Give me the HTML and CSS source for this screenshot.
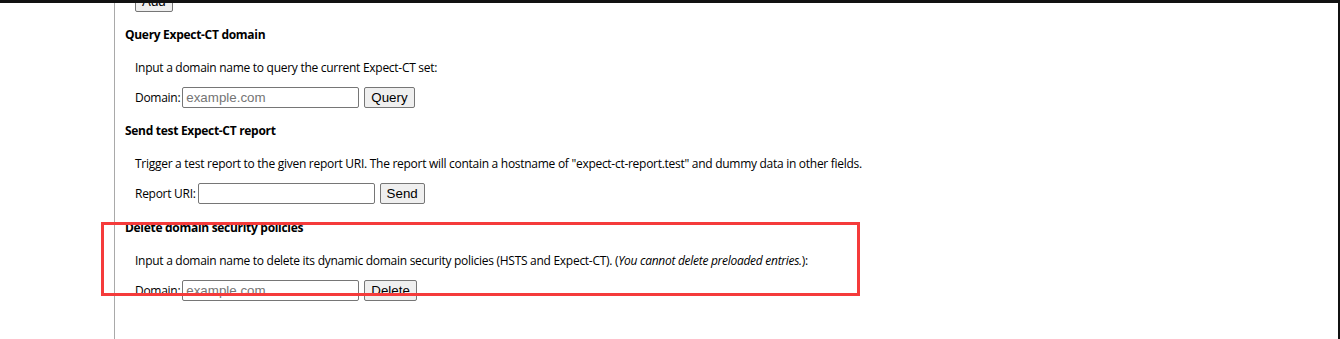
FILE: index.html
```html
<!DOCTYPE html>
<html lang="en">
<head>
  <meta charset="utf-8" />
  <title>Domain Security Policy</title>
  <link rel="stylesheet" href="styles.css">
</head>
<body>
  <div class="frame">
    <!-- left nav column (empty at this scroll position) -->
    <aside class="sidebar"></aside>

    <main class="content">
      <div class="row addRow">
        <button type="button">Add</button>
      </div>

      <!-- QUERY EXPECT-CT -->
      <section class="block">
        <h4>Query Expect-CT domain</h4>
        <p>Input a domain name to query the current Expect-CT set:</p>
        <form class="row">
          <label for="ctQueryInput">Domain:</label>
          <input type="text" id="ctQueryInput" placeholder="example.com" />
          <button type="button">Query</button>
        </form>
      </section>

      <!-- TEST REPORT -->
      <section class="block">
        <h4>Send test Expect-CT report</h4>
        <p>Trigger a test report to the given report URI. The report will contain a hostname of "expect-ct-report.test" and dummy data in other fields.</p>
        <form class="row">
          <label for="ctReportInput">Report URI:</label>
          <input type="text" id="ctReportInput" />
          <button type="button">Send</button>
        </form>
      </section>

      <!-- DELETE -->
      <section class="block last">
        <h4>Delete domain security policies</h4>
        <p>Input a domain name to delete its dynamic domain security policies (HSTS and Expect-CT). (<i>You cannot delete preloaded entries.</i>):</p>
        <form class="row">
          <label for="deleteInput">Domain:</label>
          <input type="text" id="deleteInput" placeholder="example.com" />
          <button type="button">Delete</button>
        </form>
      </section>
    </main>

    <!-- red annotation box -->
    <div class="highlight"></div>
  </div>
</body>
</html>
```

FILE: styles.css
```css
/* ========== GLOBAL ========== */
* {
  box-sizing: border-box;
}
body {
  margin: 0;
  background: #fff;
  color: #000;
  font-family: "Open Sans", "Noto Sans", sans-serif;
  font-size: 12px;
  overflow: hidden;
}

.frame {
  position: relative;
  display: flex;
  height: 339px;
  border-top: 3px solid #111;
  border-right: 2px solid #111;
  overflow: hidden;
}

.sidebar {
  flex: 0 0 115px;
  border-right: 1px solid #a9a9a9;
}

/* ========== CONTENT ========== */
.content {
  flex: 1;
  padding-left: 10px;
}

.block {
  margin-top: 15px;
}
.block.last {
  margin-top: 16px;
}
.block h4 {
  margin: 0;
  font-size: 12px;
  font-weight: 700;
  line-height: 18px;
  letter-spacing: -0.3px;
}
.block p {
  margin: 16px 0 0 10px;
  line-height: 16px;
  letter-spacing: -0.28px;
}

/* ========== FORM ROWS ========== */
.row {
  display: flex;
  align-items: center;
  height: 20px;
  margin: 11px 0 0 10px;
}
.addRow {
  margin-top: -12px;
}
.row label {
  margin-right: 2px;
  letter-spacing: -0.28px;
}
.row input {
  width: 177px;
  height: 21px;
  margin: 0 5px 0 0;
  padding: 1px 3px;
  border: 1px solid #767676;
  border-radius: 2px;
  font-family: "Liberation Sans", Arial, sans-serif;
  font-size: 13.33px;
}
.row input::placeholder {
  color: #757575;
}
.row button {
  height: 21px;
  padding: 1px 6px;
  border: 1px solid #767676;
  border-radius: 2px;
  background: #efefef;
  color: #000;
  font-family: "Liberation Sans", Arial, sans-serif;
  font-size: 13.33px;
}

/* ========== ANNOTATION ========== */
.highlight {
  position: absolute;
  left: 101px;
  top: 219px;
  width: 759px;
  height: 74px;
  border: 3px solid #f53b3b;
  pointer-events: none;
}
```
